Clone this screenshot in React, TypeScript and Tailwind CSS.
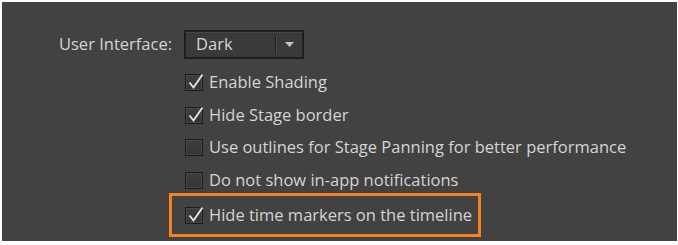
import type { ReactNode } from "react";

const font = { fontFamily: '"Open Sans", "Noto Sans", sans-serif' };

function CheckBox({ checked }: { checked: boolean }) {
  return (
    <span className="relative block h-[17px] w-[18px] shrink-0 border border-[#1c1c1c] bg-gradient-to-b from-[#3e3e3e] to-[#353535] shadow-[inset_0_0_0_1px_#474747]">
      {checked && (
        <svg
          className="absolute left-0 top-0 overflow-visible"
          width="18"
          height="17"
          viewBox="0 0 18 17"
        >
          <path
            d="M3.5 7.5 L7.5 12.5 L16.5 -0.5"
            fill="none"
            stroke="#e4e4e4"
            strokeWidth="1.9"
            strokeLinecap="butt"
            strokeLinejoin="miter"
          />
        </svg>
      )}
    </span>
  );
}

function Row({ checked, children }: { checked: boolean; children: ReactNode }) {
  return (
    <div className="flex h-[32.5px] items-center gap-[6px]">
      <CheckBox checked={checked} />
      <span className="whitespace-nowrap text-[16.5px] text-[#d4d4d4]">{children}</span>
    </div>
  );
}

export default function App() {
  return (
    <div className="h-[245px] w-[678px] bg-white pb-[4px] pl-[2px] pr-[1px] pt-[2px]" style={font}>
      <div className="h-full w-full bg-[#424242] pt-[28px]">
        {/* user interface dropdown */}
        <div className="flex items-center">
          <span className="w-[170px] whitespace-nowrap text-right text-[16.5px] text-[#d4d4d4]">
            User Interface:
          </span>
          <div className="ml-3 flex h-[29px] w-[120px] items-center border-2 border-[#1e1e1e] bg-[#3a3a3a] shadow-[inset_0_1px_0_#464646]">
            <span className="flex-1 pl-[10px] text-[16.5px] text-[#d4d4d4]">Dark</span>
            <span className="h-[17px] w-px bg-[#1f1f1f] shadow-[1px_0_0_#4a4a4a]" />
            <span className="flex w-[26px] justify-center">
              <svg width="9" height="5" viewBox="0 0 9 5">
                <path d="M0 0 H9 L4.5 5 Z" fill="#c4c4c4" />
              </svg>
            </span>
          </div>
        </div>

        {/* checkbox options */}
        <div className="ml-[183px] mt-[7.25px] flex flex-col">
          <Row checked>Enable Shading</Row>
          <Row checked>Hide Stage border</Row>
          <Row checked={false}>Use outlines for Stage Panning for better performance</Row>
          <Row checked={false}>Do not show in-app notifications</Row>
          <div className="-ml-4 -mt-[3px] flex h-[44px] w-fit items-center gap-[6px] border-[3px] border-[#f5821f] pl-[13px] pr-[6px]">
            <CheckBox checked />
            <span className="whitespace-nowrap text-[16.5px] text-[#d4d4d4]">
              Hide time markers on the timeline
            </span>
          </div>
        </div>
      </div>
    </div>
  );
}
